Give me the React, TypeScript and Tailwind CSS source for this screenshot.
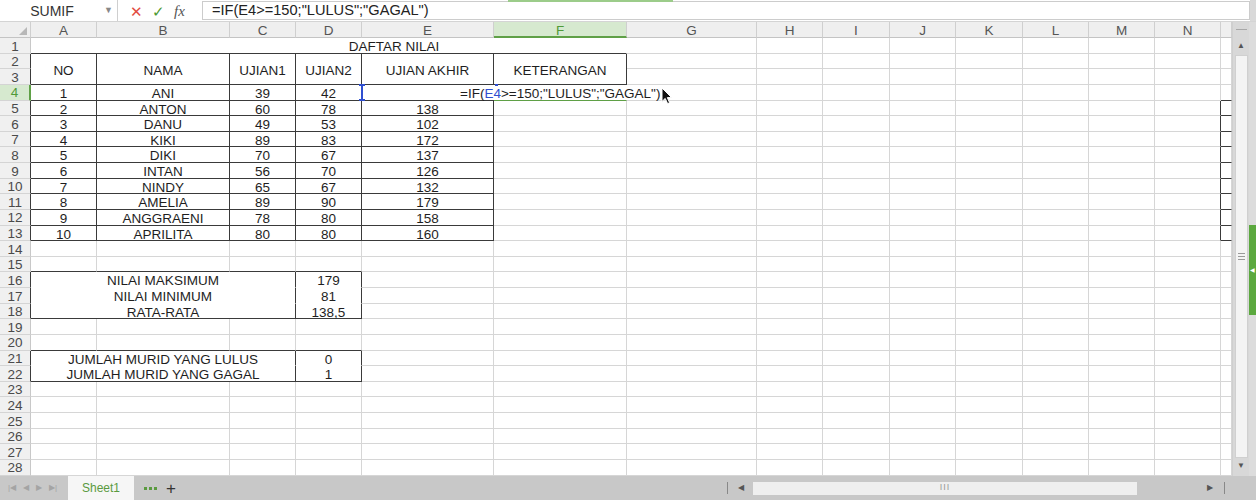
import React from 'react';

type B = 'l' | 'd' | 'n' | 'g';

const COLS = ['A', 'B', 'C', 'D', 'E', 'F', 'G', 'H', 'I', 'J', 'K', 'L', 'M', 'N', ''];

const TABLE: string[][] = [
  ['1', 'ANI', '39', '42', ''],
  ['2', 'ANTON', '60', '78', '138'],
  ['3', 'DANU', '49', '53', '102'],
  ['4', 'KIKI', '89', '83', '172'],
  ['5', 'DIKI', '70', '67', '137'],
  ['6', 'INTAN', '56', '70', '126'],
  ['7', 'NINDY', '65', '67', '132'],
  ['8', 'AMELIA', '89', '90', '179'],
  ['9', 'ANGGRAENI', '78', '80', '158'],
  ['10', 'APRILITA', '80', '80', '160'],
];

const SUMMARY: Record<number, [string, string]> = {
  16: ['NILAI MAKSIMUM', '179'],
  17: ['NILAI MINIMUM', '81'],
  18: ['RATA-RATA', '138,5'],
  21: ['JUMLAH MURID YANG LULUS', '0'],
  22: ['JUMLAH MURID YANG GAGAL', '1'],
};

const HEAD = ['NO', 'NAMA', 'UJIAN1', 'UJIAN2', 'UJIAN AKHIR', 'KETERANGAN'];

const rightCls: Record<B, string> = {
  l: 'border-r-[#d6d6d6]',
  d: 'border-r-[#3a3a3a]',
  n: 'border-r-transparent',
  g: 'border-r-[#5fa046]',
};
const bottomCls: Record<B, string> = {
  l: 'border-b-[#d6d6d6]',
  d: 'border-b-[#3a3a3a]',
  n: 'border-b-transparent',
  g: 'border-b-[#5fa046]',
};

const inSummary = (r: number) => (r >= 16 && r <= 18) || r === 21 || r === 22;

function rightOf(r: number, cEnd: number): B {
  if (r === 1 && cEnd === 5) return 'n';
  if (r >= 2 && r <= 13 && cEnd <= 4) return 'd';
  if ((r === 2 || r === 3) && cEnd === 5) return 'd';
  if (inSummary(r) && (cEnd === 2 || cEnd === 3)) return 'd';
  if (r >= 5 && r <= 13 && cEnd === 13) return 'd';
  return 'l';
}

function bottomOf(rEnd: number, c: number): B {
  if (rEnd === 4 && c === 5) return 'g';
  if (rEnd >= 1 && rEnd <= 13 && c <= 4) return 'd';
  if ((rEnd === 1 || rEnd === 3) && c === 5) return 'd';
  if ((rEnd === 15 || rEnd === 18 || rEnd === 20 || rEnd === 22) && c <= 3) return 'd';
  if ((rEnd === 16 || rEnd === 17 || rEnd === 21) && c <= 3) return 'n';
  if (rEnd >= 4 && rEnd <= 13 && c === 14) return 'd';
  return 'l';
}

type CellDef = { key: string; span: string; text: React.ReactNode; right: B; bottom: B; wide?: boolean };

function buildRow(r: number): CellDef[] {
  const out: CellDef[] = [];
  let c = 0;
  while (c < 15) {
    if (r === 1 && c === 0) {
      out.push({ key: `1-0`, span: 'col-span-6', text: 'DAFTAR NILAI', right: rightOf(1, 5), bottom: bottomOf(1, 0), wide: true });
      c = 6;
      continue;
    }
    if (r === 2 && c <= 5) {
      out.push({ key: `2-${c}`, span: 'row-span-2', text: HEAD[c], right: rightOf(2, c), bottom: bottomOf(3, c) });
      c++;
      continue;
    }
    if (r === 3 && c <= 5) {
      c++;
      continue;
    }
    if (inSummary(r) && c === 0) {
      out.push({ key: `${r}-0`, span: 'col-span-3', text: SUMMARY[r][0], right: rightOf(r, 2), bottom: bottomOf(r, 0) });
      c = 3;
      continue;
    }
    let text = '';
    if (r >= 4 && r <= 13 && c <= 4) text = TABLE[r - 4][c];
    if (inSummary(r) && c === 3) text = SUMMARY[r][1];
    out.push({ key: `${r}-${c}`, span: '', text, right: rightOf(r, c), bottom: bottomOf(r, c) });
    c++;
  }
  return out;
}

function rowHeaderRight(r: number): string {
  if (r === 4) return 'border-r-2 border-r-[#5fa046]';
  if ((r >= 2 && r <= 13) || inSummary(r)) return 'border-r border-r-[#3a3a3a]';
  return 'border-r border-r-[#c8c8c8]';
}

function Cursor() {
  return (
    <svg width="12" height="18" viewBox="0 0 12 18" className="absolute left-[661px] top-[65px]">
      <path d="M1 1 L1 14.5 L4.2 11.4 L6.6 16.6 L8.6 15.7 L6.3 10.6 L10.6 10.6 Z" fill="#111" stroke="#fff" strokeWidth="1" />
    </svg>
  );
}

export default function App() {
  const rows = Array.from({ length: 28 }, (_, i) => i + 1);
  return (
    <div className="w-[1256px] h-[500px] overflow-hidden bg-white font-['Liberation_Sans',Arial,sans-serif] text-[#1e1e1e] select-none">
      {/* formula bar */}
      <div className="relative flex h-[22px] border-b border-[#d4d4d4] bg-white">
        <div className="absolute left-[508px] top-0 h-[2px] w-[165px] bg-[#9ccc8a]" />
        <div className="flex w-[118px] items-center border-r border-[#cfcfcf] bg-white pt-[1px]">
          <span className="w-[104px] text-center text-[14px] text-[#333]">SUMIF</span>
          <span className="text-[9px] text-[#888]">▼</span>
        </div>
        <div className="flex w-[84px] items-center pt-[1px]">
          <span className="ml-[12px] text-[15px] leading-none text-[#e24c43]">✕</span>
          <span className="ml-[9px] text-[15px] leading-none text-[#4b9a31]">✓</span>
          <span className="ml-[9px] font-['Liberation_Serif',serif] text-[15px] italic leading-none text-[#555]">fx</span>
        </div>
        <div className="my-[1px] flex w-[1048px] items-center border border-[#cccccc] bg-white pl-[9px] pt-[1px] text-[14.6px] text-[#222]">
          =IF(E4&gt;=150;"LULUS";"GAGAL")
        </div>
        <div className="flex-1 bg-[#d9d9d9]" />
      </div>

      <div className="flex h-[454px]">
        {/* grid */}
        <div className="relative w-[1232px] overflow-hidden">
          <div className="grid grid-cols-[31px_66px_133px_66px_66px_132px_133px_130px_66px_67px_66px_67px_66px_66px_66px_11px] grid-rows-[16px_repeat(28,15.625px)] text-[13.5px] leading-none">
            {/* header row */}
            <div className="relative border-r border-b border-r-[#cfcfcf] border-b-[#c4c4c4] bg-[#efefef]">
              <svg width="8" height="8" viewBox="0 0 8 8" className="absolute right-[3px] bottom-[2px]">
                <polygon points="8,0 8,8 0,8" fill="#b8b8b8" />
              </svg>
            </div>
            {COLS.map((l, i) =>
              i === 5 ? (
                <div key={i} className="flex items-center justify-center border-r border-b-2 border-r-[#cfcfcf] border-b-[#5fa046] bg-[#d6e9cf] pt-[3px] text-[13.5px] text-[#4f9a38]">
                  {l}
                </div>
              ) : (
                <div key={i} className="flex items-center justify-center border-r border-b border-r-[#cfcfcf] border-b-[#c4c4c4] bg-[#efefef] pt-[3px] text-[13.5px] text-[#555]">
                  {l}
                </div>
              )
            )}
            {rows.map((r) => (
              <React.Fragment key={r}>
                <div
                  className={`flex items-center justify-center border-b border-b-[#d4d4d4] pt-[2px] text-[13.5px] ${rowHeaderRight(r)} ${
                    r === 4 ? 'bg-[#d6e9cf] text-[#4f9a38]' : 'bg-[#f0f0f0] text-[#4a4a4a]'
                  }`}
                >
                  {r}
                </div>
                {buildRow(r).map((cell) => (
                  <div
                    key={cell.key}
                    className={`flex items-center whitespace-nowrap border-r border-b pt-[3px] ${cell.span} ${rightCls[cell.right]} ${bottomCls[cell.bottom]} ${
                      cell.wide ? 'justify-start' : 'justify-center'
                    }`}
                  >
                    {cell.wide ? <div className="w-[726px] shrink-0 text-center">{cell.text}</div> : cell.text}
                  </div>
                ))}
              </React.Fragment>
            ))}
          </div>

          {/* in-cell editor for F4 */}
          <div className="absolute left-[457px] top-[63px] flex h-[15px] w-[206px] items-center bg-white pl-[3px] pt-[3px] text-[13.5px] leading-none text-[#1e1e1e] whitespace-nowrap">
            =IF(<span className="text-[#2f4fd0]">E4</span>&gt;=150;"LULUS";"GAGAL")
          </div>
          {/* reference marker on E4 */}
          <div className="absolute left-[361px] top-[62px] h-[17px] w-[2px] bg-[#2f4fd0]" />
          <div className="absolute left-[359px] top-[62px] h-[2px] w-[6px] bg-[#2f4fd0]" />
          <div className="absolute left-[359px] top-[77px] h-[2px] w-[6px] bg-[#2f4fd0]" />
          <div className="absolute left-[495px] top-[62px] h-[2px] w-[3px] bg-[#2f4fd0]" />
          <Cursor />
        </div>

        {/* vertical scrollbar */}
        <div className="flex w-[17px] flex-col items-center border-l border-[#cfcfcf] bg-[#d8d8d8]">
          <div className="mt-[7px] h-[1px] w-[11px] bg-[#a8a8a8]" />
          <div className="mt-[12px] text-[8px] leading-none text-[#555]">▲</div>
          <div className="mt-[5px] flex w-[13px] flex-1 flex-col items-center justify-center border border-[#d0d0d0] bg-[#f4f4f4]">
            <div className="h-[1px] w-[7px] bg-[#9a9a9a]" />
            <div className="mt-[2px] h-[1px] w-[7px] bg-[#9a9a9a]" />
            <div className="mt-[2px] h-[1px] w-[7px] bg-[#9a9a9a]" />
          </div>
          <div className="mt-[4px] mb-[6px] text-[8px] leading-none text-[#555]">▼</div>
        </div>
        <div className="flex w-[7px] flex-col bg-[#dcdcdc]">
          <div className="mt-[203px] flex h-[90px] items-center justify-center bg-[#5ba83e]">
            <span className="text-[6px] leading-none text-white">◀</span>
          </div>
        </div>
      </div>

      {/* bottom bar */}
      <div className="flex h-[24px] items-center bg-[#c8c8c8]">
        <div className="flex h-full w-[727px] items-center">
          <div className="flex w-[68px] items-center gap-[7px] pl-[8px] text-[8px] text-[#a4a4a4]">
            <span>|◀</span>
            <span>◀</span>
            <span>▶</span>
            <span>▶|</span>
          </div>
          <div className="flex h-full w-[66px] items-center justify-center bg-[#f6f6f6] text-[12px] text-[#5a9a3f]">Sheet1</div>
          <div className="ml-[10px] flex items-center gap-[2px]">
            <div className="h-[3px] w-[3px] bg-[#5a9a3f]" />
            <div className="h-[3px] w-[3px] bg-[#5a9a3f]" />
            <div className="h-[3px] w-[3px] bg-[#5a9a3f]" />
          </div>
          <div className="ml-[9px] text-[17px] leading-none text-[#333]">+</div>
        </div>
        <div className="h-[12px] w-[1px] bg-[#888]" />
        <div className="flex w-[25px] items-center justify-center text-[8px] text-[#555]">◀</div>
        <div className="flex h-[13px] w-[384px] items-center justify-center bg-[#efefef] text-[9px] tracking-[1px] text-[#999]">III</div>
        <div className="flex w-[87px] items-center justify-end pr-[11px] text-[8px] text-[#555]">▶</div>
        <div className="h-[12px] w-[1px] bg-[#888]" />
      </div>
    </div>
  );
}
